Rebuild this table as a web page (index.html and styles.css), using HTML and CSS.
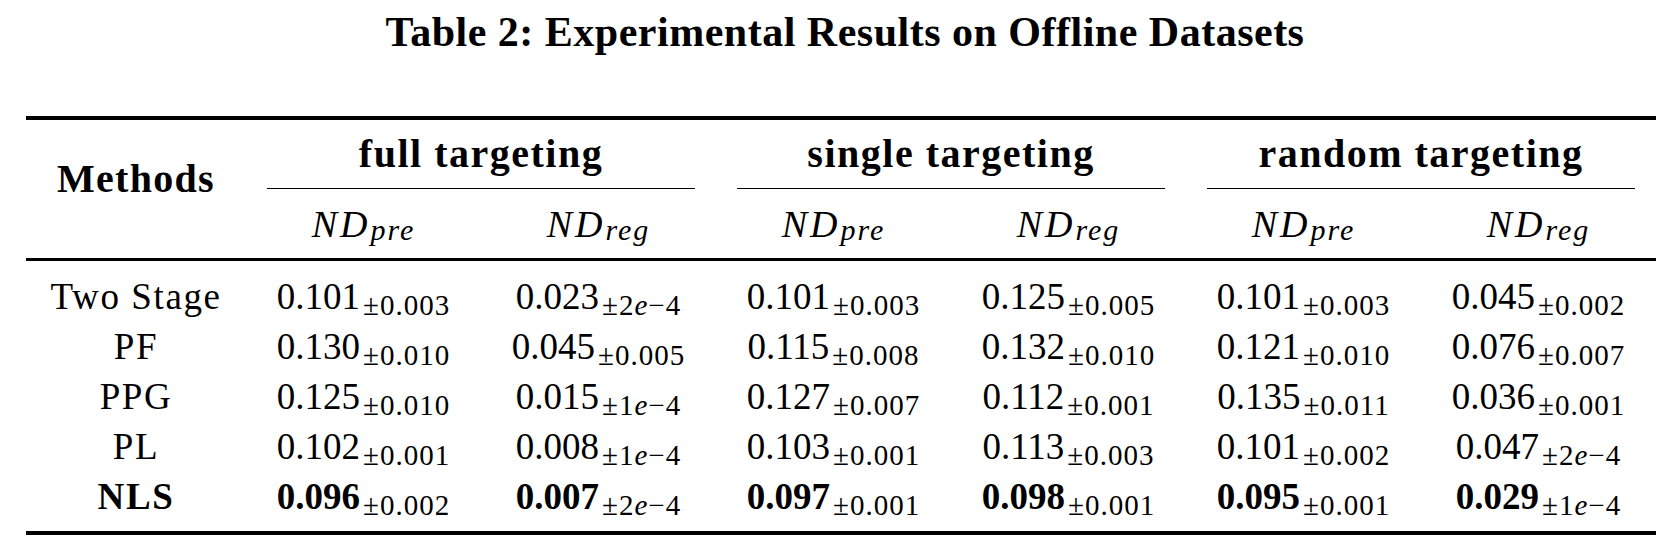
FILE: index.html
```html
<!DOCTYPE html>
<html lang="en">
<head>
<meta charset="utf-8">
<title>Table 2: Experimental Results on Offline Datasets</title>
<link rel="stylesheet" href="styles.css">
</head>
<body>
<div class="page">
  <h1 class="caption">Table 2: Experimental Results on Offline Datasets</h1>
  <div class="results">
    <div class="head">
      <div class="methods-h">Methods</div>
      <div class="group">full targeting</div>
      <div class="group">single targeting</div>
      <div class="group">random targeting</div>
      <div class="metric">ND<span class="msub">pre</span></div>
      <div class="metric">ND<span class="msub">reg</span></div>
      <div class="metric">ND<span class="msub">pre</span></div>
      <div class="metric">ND<span class="msub">reg</span></div>
      <div class="metric">ND<span class="msub">pre</span></div>
      <div class="metric">ND<span class="msub">reg</span></div>
    </div>
    <div class="body">
      <div class="row">
        <div class="method">Two Stage</div>
        <div class="val">0.101<span class="pm">±0.003</span></div>
        <div class="val">0.023<span class="pm">±2<i>e</i>−4</span></div>
        <div class="val">0.101<span class="pm">±0.003</span></div>
        <div class="val">0.125<span class="pm">±0.005</span></div>
        <div class="val">0.101<span class="pm">±0.003</span></div>
        <div class="val">0.045<span class="pm">±0.002</span></div>
      </div>
      <div class="row">
        <div class="method">PF</div>
        <div class="val">0.130<span class="pm">±0.010</span></div>
        <div class="val">0.045<span class="pm">±0.005</span></div>
        <div class="val">0.115<span class="pm">±0.008</span></div>
        <div class="val">0.132<span class="pm">±0.010</span></div>
        <div class="val">0.121<span class="pm">±0.010</span></div>
        <div class="val">0.076<span class="pm">±0.007</span></div>
      </div>
      <div class="row">
        <div class="method">PPG</div>
        <div class="val">0.125<span class="pm">±0.010</span></div>
        <div class="val">0.015<span class="pm">±1<i>e</i>−4</span></div>
        <div class="val">0.127<span class="pm">±0.007</span></div>
        <div class="val">0.112<span class="pm">±0.001</span></div>
        <div class="val">0.135<span class="pm">±0.011</span></div>
        <div class="val">0.036<span class="pm">±0.001</span></div>
      </div>
      <div class="row">
        <div class="method">PL</div>
        <div class="val">0.102<span class="pm">±0.001</span></div>
        <div class="val">0.008<span class="pm">±1<i>e</i>−4</span></div>
        <div class="val">0.103<span class="pm">±0.001</span></div>
        <div class="val">0.113<span class="pm">±0.003</span></div>
        <div class="val">0.101<span class="pm">±0.002</span></div>
        <div class="val">0.047<span class="pm">±2<i>e</i>−4</span></div>
      </div>
      <div class="row best">
        <div class="method">NLS</div>
        <div class="val"><b>0.096</b><span class="pm">±0.002</span></div>
        <div class="val"><b>0.007</b><span class="pm">±2<i>e</i>−4</span></div>
        <div class="val"><b>0.097</b><span class="pm">±0.001</span></div>
        <div class="val"><b>0.098</b><span class="pm">±0.001</span></div>
        <div class="val"><b>0.095</b><span class="pm">±0.001</span></div>
        <div class="val"><b>0.029</b><span class="pm">±1<i>e</i>−4</span></div>
      </div>
    </div>
  </div>
</div>
</body>
</html>
```
FILE: styles.css
```css
html, body {
  margin: 0;
  padding: 0;
  background: #ffffff;
}

body {
  font-family: "Liberation Serif", "Times New Roman", serif;
  color: #000000;
  width: 1660px;
  height: 540px;
  overflow: hidden;
}

.page {
  width: 1660px;
}

.caption {
  margin: 0 0 60px 26px;
  width: 1630px;
  padding: 8px 0 0 8px;
  box-sizing: border-box;
  text-align: center;
  font-size: 42px;
  line-height: 48px;
  font-weight: 700;
  letter-spacing: 0.5px;
}

.results {
  margin-left: 26px;
  width: 1630px;
  border-top: 4px solid #000;
  border-bottom: 4px solid #000;
}

.head,
.row {
  display: grid;
  grid-template-columns: 220px repeat(6, 235px);
}

.head {
  border-bottom: 3px solid #000;
}

.methods-h {
  grid-column: 1;
  grid-row: 1 / span 2;
  font-size: 40px;
  font-weight: 700;
  line-height: 44px;
  padding-top: 37px;
  text-align: center;
  letter-spacing: 1.3px;
}

.group {
  grid-column: span 2;
  margin: 0 21px;
  border-bottom: 1px solid #000;
  font-size: 40px;
  font-weight: 700;
  line-height: 68px;
  text-align: center;
  letter-spacing: 1.5px;
}

.metric {
  font-style: italic;
  font-size: 38px;
  line-height: 68px;
  padding-top: 1px;
  text-align: center;
  letter-spacing: 3px;
}

.msub {
  font-size: 30px;
  line-height: 1;
  letter-spacing: 2px;
  vertical-align: -3px;
}

.body {
  padding: 11px 0 9px;
}

.row {
  font-size: 37px;
  line-height: 50px;
  text-align: center;
}

.method {
  letter-spacing: 1.6px;
}

.val {
  letter-spacing: 0;
}

.pm {
  font-size: 29px;
  line-height: 1;
  letter-spacing: 1px;
  vertical-align: -6px;
  margin-left: 3px;
}

.best .method,
.val b {
  font-weight: 700;
}
```
